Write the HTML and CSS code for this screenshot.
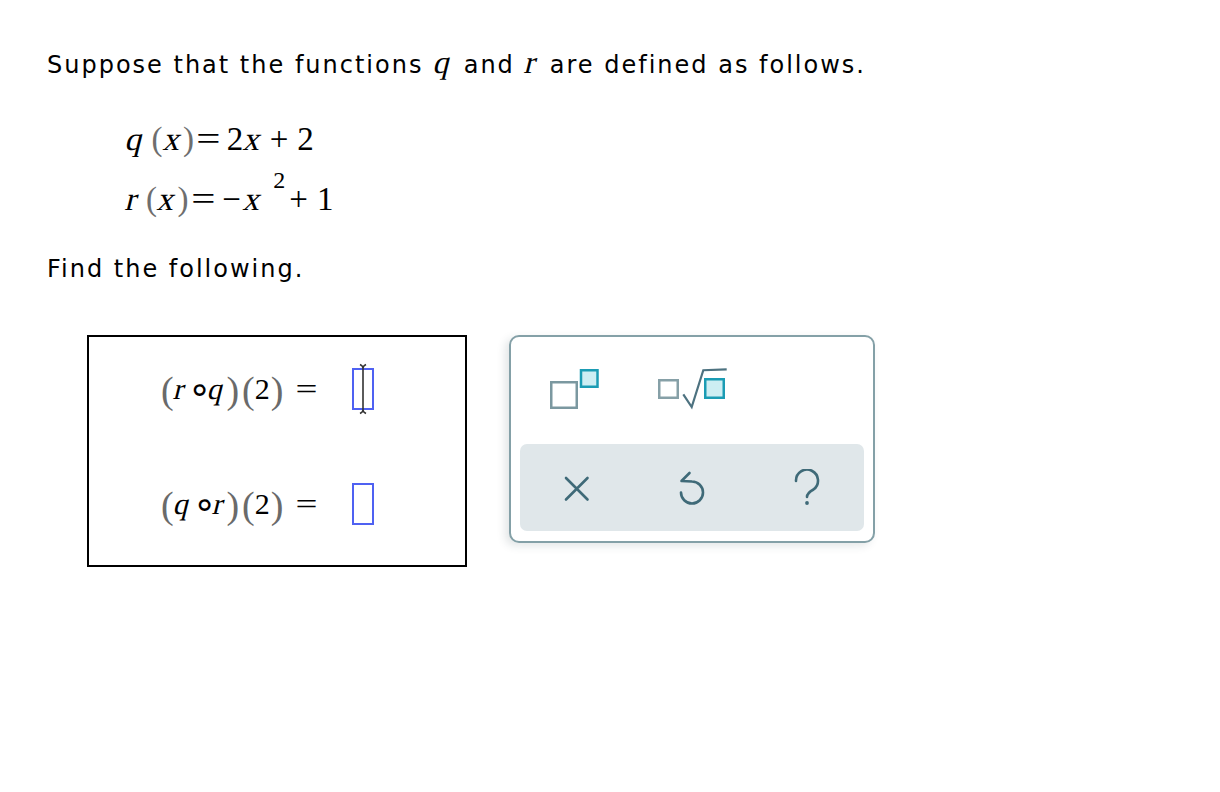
FILE: index.html
```html
<!DOCTYPE html>
<html lang="en">
<head>
<meta charset="utf-8">
<title>Composition of functions</title>
<link rel="stylesheet" href="styles.css">
</head>
<body>
<main class="page">
  <p class="lead">Suppose that the functions <i class="mv">q</i> and <i class="mv">r</i> are defined as follows.</p>
  <div class="defs">
    <div class="eq"><i class="v">q</i><span class="par open">(</span><i class="v x">x</i><span class="par">)</span><span class="rel">=</span><span class="n">2</span><i class="v x">x</i><span class="bin">+</span><span class="n">2</span></div>
    <div class="eq"><i class="v">r</i><span class="par open">(</span><i class="v x">x</i><span class="par">)</span><span class="rel">=</span><span class="neg">&minus;</span><i class="v x">x</i><span class="sup">2</span><span class="bin">+</span><span class="n">1</span></div>
  </div>
  <p class="lead find">Find the following.</p>
  <div class="work">
    <div class="answers">
      <div class="arow">
        <span class="expr"><span class="bp">(</span><i class="av first">r</i><span class="comp">&#8728;</span><i class="av">q</i><span class="bp close">)</span><span class="bp gap">(</span><span class="an">2</span><span class="bp last">)</span><span class="aeq">=</span></span>
        <span class="blank active"><svg class="ibeam" width="12" height="52" viewBox="0 0 12 52"><path d="M3 1.5 Q6 3 6 5 Q6 3 9 1.5 M6 5 V47 M3 50.5 Q6 49 6 47 Q6 49 9 50.5" fill="none" stroke="#333" stroke-width="1.6"/></svg></span>
      </div>
      <div class="arow">
        <span class="expr"><span class="bp">(</span><i class="av first">q</i><span class="comp">&#8728;</span><i class="av">r</i><span class="bp close">)</span><span class="bp gap">(</span><span class="an">2</span><span class="bp last">)</span><span class="aeq">=</span></span>
        <span class="blank"></span>
      </div>
    </div>
    <div class="keypad">
      <div class="keys-top">
        <button class="key" aria-label="superscript">
          <svg width="54" height="44" viewBox="0 0 54 44">
            <rect x="1.25" y="15.25" width="25.5" height="25.5" fill="#fff" stroke="#7b98a0" stroke-width="2.5"/>
            <rect x="31" y="3.25" width="16.5" height="16.5" fill="#cdeef3" stroke="#1b9cb4" stroke-width="2.5"/>
          </svg>
        </button>
        <button class="key" aria-label="nth root">
          <svg width="72" height="44" viewBox="0 0 72 44">
            <rect x="3.25" y="13.25" width="18.5" height="17.5" fill="#fff" stroke="#86a0a7" stroke-width="2.5"/>
            <polyline points="27.3,27.3 35.7,40 47.3,3.2 70.7,2.3" fill="none" stroke="#4d7280" stroke-width="2.2"/>
            <rect x="49.25" y="12.25" width="18.5" height="18.5" fill="#cdeef3" stroke="#1b9cb4" stroke-width="2.5"/>
          </svg>
        </button>
        <span class="key empty"></span>
      </div>
      <div class="keys-bottom">
        <button class="key" aria-label="clear">
          <svg width="32" height="32" viewBox="0 0 32 32">
            <path d="M5 6 L26.5 27.5 M26.5 6 L5 27.5" fill="none" stroke="#3f6a78" stroke-width="2.6" stroke-linecap="round"/>
          </svg>
        </button>
        <button class="key" aria-label="undo">
          <svg width="32" height="36" viewBox="0 0 32 36">
            <path d="M13.5 3 L5.5 11 L16 11.5 A 11 11 0 1 1 5 22.5" fill="none" stroke="#3f6a78" stroke-width="2.6" stroke-linecap="round" stroke-linejoin="round"/>
          </svg>
        </button>
        <button class="key" aria-label="help">
          <svg width="32" height="38" viewBox="0 0 32 38">
            <path d="M5 12 A 11 11 0 1 1 22.5 20.5 Q 16 24 16 28" fill="none" stroke="#3f6a78" stroke-width="2.6" stroke-linecap="round"/>
            <circle cx="16" cy="34" r="1.9" fill="#3f6a78"/>
          </svg>
        </button>
      </div>
    </div>
  </div>
</main>
</body>
</html>
```
FILE: styles.css
```css
html, body {
  margin: 0;
  padding: 0;
  background: #fff;
}

body {
  width: 1220px;
  height: 792px;
  overflow: hidden;
  color: #000;
  font-family: "DejaVu Sans", Verdana, sans-serif;
}

.page {
  padding: 47px 0 0 47px;
}

.lead {
  margin: 0;
  font-size: 24px;
  line-height: 30px;
  height: 30px;
  letter-spacing: 2px;
  white-space: nowrap;
}

.mv {
  display: inline-block;
  font-family: "Liberation Serif", "Times New Roman", serif;
  font-style: normal;
  font-size: 32px;
  letter-spacing: 0;
  transform: skewX(-14deg);
  margin: 0 3px 0 2px;
}

.defs {
  margin-top: 32px;
  padding-left: 80px;
}

.eq {
  display: flex;
  align-items: baseline;
  height: 60px;
  line-height: 60px;
  font-family: "Liberation Serif", "Times New Roman", serif;
  font-size: 33px;
  white-space: nowrap;
}

.eq .v {
  display: inline-block;
  font-style: normal;
  transform: skewX(-14deg);
}

.eq .x {
  padding: 0 2px 0 2px;
}

.eq .par {
  color: #6e6e6e;
}

.eq .par.open {
  margin-left: 8px;
}

.eq .rel {
  margin: 0 9px 0 5px;
  display: inline-block;
  transform: scaleX(1.3);
}

.eq .bin {
  margin: 0 9px 0 6px;
}

.eq .neg {
  margin: 0 2px 0 1px;
}

.eq .sup {
  font-size: 24px;
  line-height: 0;
  margin-left: 10px;
  margin-right: -2px;
  position: relative;
  top: -22px;
}

.find {
  margin-top: 25px;
}

.work {
  display: flex;
  align-items: flex-start;
  gap: 42px;
  margin-top: 51px;
  margin-left: 40px;
}

.answers {
  box-sizing: border-box;
  width: 380px;
  height: 232px;
  border: 2px solid #000;
  padding: 31px 0 0 72px;
  display: flex;
  flex-direction: column;
  gap: 73px;
}

.arow {
  display: flex;
  align-items: center;
  height: 42px;
}

.expr {
  font-family: "Liberation Serif", "Times New Roman", serif;
  font-size: 30px;
  line-height: 42px;
  white-space: nowrap;
}

.bp {
  font-size: 38px;
  color: #6a6a6a;
  vertical-align: -4px;
}

.bp.close {
  margin-left: 2px;
}

.bp.gap {
  margin-left: 3px;
}

.bp.last {
  margin-left: 1px;
}

.av {
  display: inline-block;
  font-style: normal;
  transform: skewX(-14deg);
}

.av.first {
  margin-left: 1px;
}

.comp {
  font-family: "DejaVu Sans", sans-serif;
  font-size: 38px;
  margin: 0 -2px 0 3px;
  vertical-align: -3px;
}

.aeq {
  display: inline-block;
  margin-left: 15px;
  transform: scaleX(1.3);
}

.blank {
  box-sizing: border-box;
  position: relative;
  display: inline-block;
  width: 22px;
  height: 42px;
  border: 2px solid #4f61f2;
  margin-left: 37px;
}

.ibeam {
  position: absolute;
  left: 3px;
  top: -7px;
}

.keypad {
  box-sizing: border-box;
  width: 366px;
  height: 208px;
  border: 2px solid #84a0a7;
  border-radius: 10px;
  padding: 0 9px 10px;
  display: flex;
  flex-direction: column;
  box-shadow: -4px 3px 9px rgba(40, 60, 70, 0.13);
  background: #fff;
}

.keys-top {
  display: grid;
  grid-template-columns: repeat(3, 1fr);
  align-items: center;
  height: 107px;
  padding-bottom: 4px;
  box-sizing: border-box;
}

.keys-bottom {
  display: grid;
  grid-template-columns: repeat(3, 1fr);
  align-items: center;
  height: 87px;
  background: #e0e7ea;
  border-radius: 7px;
}

.key {
  display: flex;
  align-items: center;
  justify-content: center;
  border: 0;
  padding: 0;
  margin: 0;
  background: transparent;
}

.key svg {
  display: block;
}
```
